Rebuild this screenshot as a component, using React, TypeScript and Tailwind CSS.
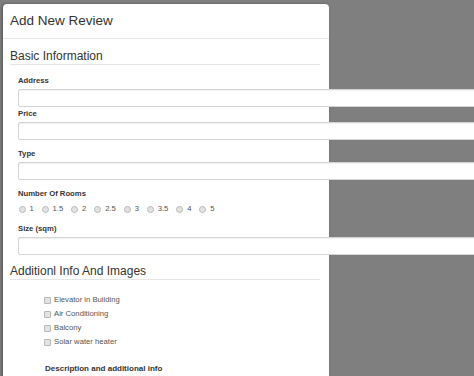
import React from "react";

const rooms = ["1", "1.5", "2", "2.5", "3", "3.5", "4", "5"];
const extras = ["Elevator in Building", "Air Conditioning", "Balcony", "Solar water heater"];

function Field({ label, top }: { label: string; top: string }) {
  return (
    <div className={top}>
      <div className="h-[10px] text-[7.7px] font-bold leading-[10px] text-[#333]">{label}</div>
      <div className="mt-[3px] h-[18px] w-[470px] rounded-[2px] border border-[#d4d4d4] bg-white shadow-[inset_0_1px_1px_rgba(0,0,0,0.06)]" />
    </div>
  );
}

function Legend({ children, top }: { children: React.ReactNode; top: string }) {
  return (
    <div className={`${top} mr-[9px] h-[16px] border-b border-[#e5e5e5] text-[12px] leading-[15px] text-[#333]`}>
      {children}
    </div>
  );
}

export default function App() {
  return (
    <div
      className="h-[376px] w-[474px] overflow-hidden bg-[#7f7f7f] pl-[3px] pt-[4px]"
      style={{ fontFamily: '"Liberation Sans", Arial, sans-serif' }}
    >
      <div className="h-[400px] w-[326px] rounded-t-[4px] bg-white shadow-[-1px_0_3px_rgba(0,0,0,0.35)]">
        <div className="flex h-[35px] items-center border-b border-[#e5e5e5] px-[7px] text-[13.5px] text-[#333]">
          Add New Review
        </div>

        <div className="pl-[7px]">
          <Legend top="mt-[10px]">Basic Information</Legend>

          <div className="pl-[8px]">
            <Field label="Address" top="mt-[11px]" />
            <Field label="Price" top="mt-[2px]" />
            <Field label="Type" top="mt-[9px]" />

            <div className="mt-[9px]">
              <div className="h-[10px] text-[7.7px] font-bold leading-[10px] text-[#333]">Number Of Rooms</div>
              <div className="mt-[5px] flex h-[10px] items-center pl-[0.5px] text-[7.7px] text-[#555]">
                {rooms.map((r, i) => (
                  <label key={r} className={`flex items-center gap-[4px] ${i > 0 ? "ml-[7.8px]" : ""}`}>
                    <span className="h-[7px] w-[7px] rounded-full border border-[#b8b8b8] bg-[#e3e3e3]" />
                    <span>{r}</span>
                  </label>
                ))}
              </div>
            </div>

            <Field label="Size (sqm)" top="mt-[10px]" />
          </div>

          <Legend top="mt-[9px]">Additionl Info And Images</Legend>

          <div className="mt-[13px] pl-[34px]">
            {extras.map((e) => (
              <div key={e} className="flex h-[14px] items-center gap-[3px] text-[7.7px] text-[#555]">
                <span className="h-[7px] w-[7px] rounded-[1px] border border-[#b8b8b8] bg-[#e3e3e3]" />
                <span>{e}</span>
              </div>
            ))}
          </div>

          <div className="mt-[15px] pl-[35px] text-[8px] font-bold leading-[10px] text-[#333]">
            Description and additional info
          </div>
        </div>
      </div>
    </div>
  );
}
